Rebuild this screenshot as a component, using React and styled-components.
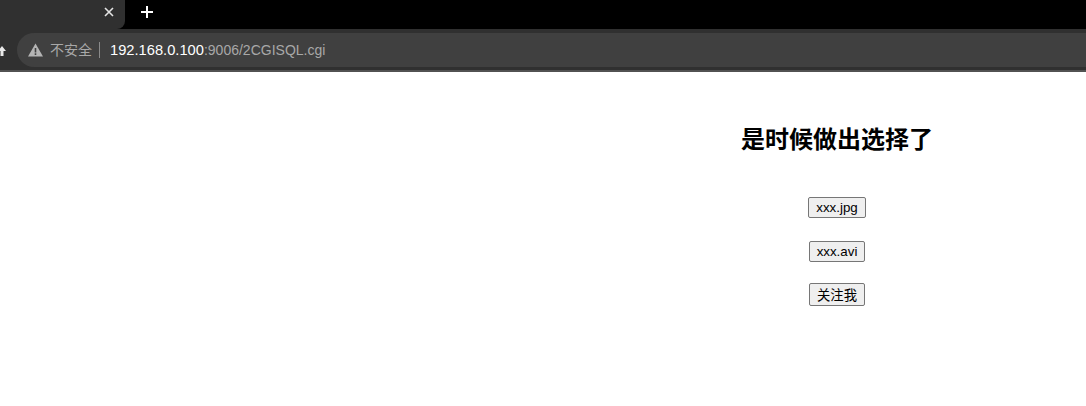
import React from 'react';
import styled, { createGlobalStyle } from 'styled-components';

const GlobalStyle = createGlobalStyle`
  html, body {
    margin: 0;
    padding: 0;
    background: #ffffff;
    overflow: hidden;
  }
`;

const Page = styled.div`
  width: 1086px;
  height: 406px;
  overflow: hidden;
  display: flex;
  flex-direction: column;
  font-family: 'Liberation Sans', 'Noto Sans CJK SC', sans-serif;
`;

// Browser chrome
const TabStrip = styled.div`
  height: 29px;
  background: #000000;
  display: flex;
  align-items: stretch;
`;

const Tab = styled.div`
  width: 125px;
  background: #303030;
  border-bottom-right-radius: 8px;
  display: flex;
  align-items: center;
  justify-content: flex-end;
  padding: 0 11px 5px 0;
  box-sizing: border-box;
`;

const NewTab = styled.div`
  margin-left: 16px;
  display: flex;
  align-items: center;
  padding-bottom: 5px;
`;

const Toolbar = styled.div`
  height: 41px;
  background: #303030;
  border-bottom: 2px solid #525252;
  display: flex;
  align-items: center;
  padding-left: 17px;
  position: relative;
`;

const UpArrow = styled.svg`
  position: absolute;
  left: -3px;
  top: 17px;
`;

const AddressBar = styled.div`
  flex: 1;
  height: 34px;
  margin-top: 1px;
  background: #404040;
  border-radius: 17px 0 0 17px;
  display: flex;
  align-items: center;
  padding-left: 11px;
`;

const SecurityLabel = styled.span`
  margin-left: 7px;
  font-size: 14px;
  color: #a8a8a8;
  padding-right: 7px;
  border-right: 1px solid #8a8a8a;
  line-height: 16px;
`;

const Url = styled.span`
  margin-left: 10px;
  font-size: 14px;
  color: #a8a8a8;
`;

const Host = styled.span`
  font-size: 14.7px;
  color: #ffffff;
`;

// Page content
const Content = styled.main`
  flex: 1;
  padding-left: 588px;
  display: flex;
  flex-direction: column;
  align-items: center;
`;

const Title = styled.h2`
  margin: 52px 0 41px;
  font-size: 24px;
  line-height: 32px;
  font-weight: 700;
  color: #000000;
  white-space: nowrap;
`;

const ChoiceButton = styled.button`
  height: ${props => props.$height}px;
  padding: 0 7px;
  margin-bottom: ${props => props.$gap}px;
  background: #efefef;
  border: 1px solid #767676;
  border-radius: 2px;
  font-family: inherit;
  font-size: 13.33px;
  color: #000000;
  box-sizing: border-box;
`;

const App = () => {
  return (
    <Page>
      <GlobalStyle />
      <TabStrip>
        <Tab>
          <svg width="10" height="10" viewBox="0 0 10 10">
            <path d="M1 1 L9 9 M9 1 L1 9" stroke="#e4e4e4" strokeWidth="1.6" />
          </svg>
        </Tab>
        <NewTab>
          <svg width="12" height="12" viewBox="0 0 12 12">
            <path d="M6 0 V12 M0 6 H12" stroke="#ffffff" strokeWidth="2" />
          </svg>
        </NewTab>
      </TabStrip>
      <Toolbar>
        <UpArrow width="10" height="10" viewBox="0 0 10 10">
          <path d="M5 0 L9 5 H6.5 V10 H3.5 V5 H1 Z" fill="#e8e8e8" />
        </UpArrow>
        <AddressBar>
          <svg width="15" height="14" viewBox="0 0 15 14">
            <path d="M7.5 0.5 L15 13.5 H0 Z" fill="#b4b4b4" />
            <path d="M6.7 5 H8.3 V9.4 H6.7 Z M6.7 10.3 H8.3 V11.9 H6.7 Z" fill="#404040" />
          </svg>
          <SecurityLabel>不安全</SecurityLabel>
          <Url>
            <Host>192.168.0.100</Host>:9006/2CGISQL.cgi
          </Url>
        </AddressBar>
      </Toolbar>
      <Content>
        <Title>是时候做出选择了</Title>
        <ChoiceButton $height={21} $gap={23}>xxx.jpg</ChoiceButton>
        <ChoiceButton $height={21} $gap={21}>xxx.avi</ChoiceButton>
        <ChoiceButton $height={23} $gap={0}>关注我</ChoiceButton>
      </Content>
    </Page>
  );
};

export default App;
